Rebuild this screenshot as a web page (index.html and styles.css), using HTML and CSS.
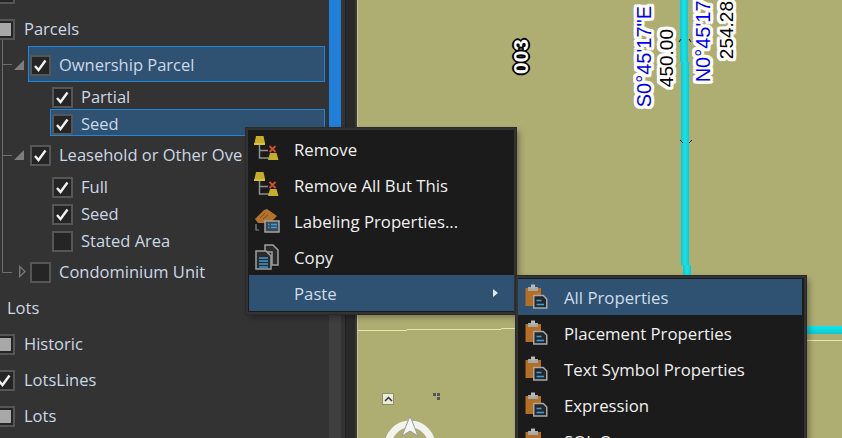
FILE: index.html
```html
<!DOCTYPE html>
<html lang="en">
<head>
<meta charset="utf-8">
<title>Labeling</title>
<link rel="stylesheet" href="styles.css">
</head>
<body>
<svg class="defs" width="0" height="0">
  <symbol id="check" viewBox="0 0 21 21"><path d="M5 11l3.5 4L15.5 5.5" fill="none" stroke="#f2f2f2" stroke-width="2.4"/></symbol>
  <symbol id="ic-remove" viewBox="0 0 26 26">
    <path d="M2 0h7.500l1.500 7H0.500z" fill="#c7ad2a"/><rect x="0" y="7" width="11" height="2" fill="#d9c23c"/>
    <path d="M5.500 9v13H15M5.500 14.500H14" fill="none" stroke="#8f8f8f" stroke-width="1.500"/>
    <path d="M15.500 10l6 6M21.500 10l-6 6" stroke="#d2502a" stroke-width="1.800"/>
    <path d="M16 17h6.500l2 7H14z" fill="#c7ad2a"/>
  </symbol>
  <symbol id="ic-label" viewBox="0 0 26 26">
    <path d="M1 11L10 2l3-1 10 7-7 7H4z" fill="#b5722a"/><path d="M6 10l5-5M9 11l5-4" stroke="#7a4a18"/>
    <path d="M2 16v6h3" fill="none" stroke="#8a8a8a" stroke-width="1.200"/>
    <rect x="11" y="13" width="14" height="11" fill="#3c4a56" stroke="#a5a5a5" stroke-width="1.500"/>
    <path d="M14 16.500h1.500M14 19.500h1.500M17 16.500h6M17 19.500h6" stroke="#3c9ad8" stroke-width="1.500"/>
  </symbol>
  <symbol id="ic-copy" viewBox="0 0 26 26">
    <path d="M11 1h8l5 5v15h-6V8h-7z" fill="#2b2b2b" stroke="#a0a0a0" stroke-width="1.500"/>
    <path d="M2 7h10l5 5v13H2z" fill="#2b2b2b" stroke="#a0a0a0" stroke-width="1.500"/>
    <path d="M5 14h9M5 17h9M5 20h9M5 23h9" stroke="#3c9ad8" stroke-width="1.600"/>
  </symbol>
  <symbol id="ic-clip" viewBox="0 0 24 26">
    <rect x="0.500" y="4" width="15.500" height="18" fill="#b46f22"/>
    <rect x="3" y="3" width="10" height="4" fill="#a8a8a8"/><rect x="6" y="0.500" width="4" height="4" fill="#b8b8b8"/>
    <path d="M8.750 11.500h9.500l3.500 3.500v9H8.750z" fill="#22272c" stroke="#a8a8a8" stroke-width="1.500"/>
    <path d="M11.500 16.500h5" stroke="#3c9ad8" stroke-width="1.600"/><path d="M11.500 20.500h7.500" stroke="#3c9ad8" stroke-width="1.600"/>
  </symbol>
</svg>

<div class="app">
  <aside class="panel">
    <svg class="tree-lines" width="30" height="290"><path d="M2.500 38V272.500H12M2.500 64.500H12M2.500 155.500H12" fill="none" stroke="#6e6e6e"/></svg>
    <div class="tree">
      <div class="row l0"><span class="cb mixed"></span></div>
      <div class="row l0"><span class="cb mixed"></span><span class="txt">Parcels</span></div>
      <div class="row l1 sel"><i class="tri open"></i><span class="cb"><svg><use href="#check"/></svg></span><span class="txt">Ownership Parcel</span></div>
      <div class="row l2 short"><span class="cb"><svg><use href="#check"/></svg></span><span class="txt">Partial</span></div>
      <div class="row l2 short sel"><span class="cb"><svg><use href="#check"/></svg></span><span class="txt">Seed</span></div>
      <div class="row l1"><i class="tri open"></i><span class="cb"><svg><use href="#check"/></svg></span><span class="txt">Leasehold or Other Ove</span></div>
      <div class="row l2 short"><span class="cb"><svg><use href="#check"/></svg></span><span class="txt">Full</span></div>
      <div class="row l2 short"><span class="cb"><svg><use href="#check"/></svg></span><span class="txt">Seed</span></div>
      <div class="row l2 short"><span class="cb"></span><span class="txt">Stated Area</span></div>
      <div class="row l1"><i class="tri closed"></i><span class="cb"></span><span class="txt">Condominium Unit</span></div>
      <div class="row head"><span class="txt">Lots</span></div>
      <div class="row l0"><span class="cb mixed"></span><span class="txt">Historic</span></div>
      <div class="row l0"><span class="cb"><svg><use href="#check"/></svg></span><span class="txt">LotsLines</span></div>
      <div class="row l0"><span class="cb mixed"></span><span class="txt">Lots</span></div>
    </div>
  </aside>
  <div class="scrollbar"><div class="thumb"></div></div>
  <div class="gutter"></div>

  <main class="map">
    <div class="pale p1"></div><div class="pale p2"></div><div class="pale p4"></div><div class="pale p3"></div>
    <div class="road r1"></div><div class="road r2"></div><div class="road r4"></div><div class="road r3"></div>
    <svg class="caret c1" width="14" height="8" viewBox="0 0 14 8"><path d="M1 6l2-3M13 6l-2-3" stroke="#111" stroke-width="1"/></svg>
    <svg class="caret c2" width="14" height="8" viewBox="0 0 14 8"><path d="M1 1l3 3M13 1l-3 3" stroke="#111" stroke-width="1"/></svg>
    <div class="lbl blue l-a">S0°45'17"E</div>
    <div class="lbl l-b">450.00</div>
    <div class="lbl blue l-c">N0°45'17"E</div>
    <div class="lbl l-d">254.28</div>
    <div class="lbl parcel">003</div>
    <button class="nav-toggle"><svg width="9" height="6" viewBox="0 0 9 6"><path d="M1 5l3.500-3.500L8 5" fill="none" stroke="#333" stroke-width="1.500"/></svg></button>
    <svg class="dots" width="8" height="8"><path d="M0 0h3v3H0zM4 0h3v3H4zM4 4h3v3H4z" fill="#555"/></svg>
    <svg class="compass" width="56" height="24" viewBox="0 0 56 24"><circle cx="27" cy="30" r="22" fill="none" stroke="#f2f2ee" stroke-width="7"/><path d="M27 0l8 20-8-5-8 5z" fill="#f6f6f2" stroke="#9a9a9a"/></svg>
  </main>

  <nav class="menu main-menu">
    <div class="item"><svg class="ico"><use href="#ic-remove"/></svg><span class="txt">Remove</span></div>
    <div class="item"><svg class="ico"><use href="#ic-remove"/></svg><span class="txt">Remove All But This</span></div>
    <div class="item"><svg class="ico"><use href="#ic-label"/></svg><span class="txt">Labeling Properties...</span></div>
    <div class="item"><svg class="ico"><use href="#ic-copy"/></svg><span class="txt">Copy</span></div>
    <div class="item active"><svg class="ico"></svg><span class="txt">Paste</span><i class="arrow"></i></div>
  </nav>
  <nav class="menu sub-menu">
    <div class="item active"><svg class="ico"><use href="#ic-clip"/></svg><span class="txt">All Properties</span></div>
    <div class="item"><svg class="ico"><use href="#ic-clip"/></svg><span class="txt">Placement Properties</span></div>
    <div class="item"><svg class="ico"><use href="#ic-clip"/></svg><span class="txt">Text Symbol Properties</span></div>
    <div class="item"><svg class="ico"><use href="#ic-clip"/></svg><span class="txt">Expression</span></div>
    <div class="item"><svg class="ico"><use href="#ic-clip"/></svg><span class="txt">SQL Query</span></div>
  </nav>
</div>
</body>
</html>
```
FILE: styles.css
```css
* { box-sizing: border-box; }
html, body { margin: 0; height: 100%; background: #333; }
.defs { position: absolute; }
.app {
  position: relative;
  display: flex;
  width: 842px;
  height: 438px;
  overflow: hidden;
  font: 16.5px/20px "Open Sans", "Noto Sans", sans-serif;
}
.txt { margin-top: 2px; }

/* Contents pane */
.panel { position: relative; width: 329px; flex: none; overflow: hidden; background: #333; color: #cbd8e6; }
.tree-lines { position: absolute; left: 0; top: 0; }
.tree { margin: -26px 4px 0 -6px; }
.row {
  position: relative;
  display: flex;
  align-items: center;
  gap: 8px;
  height: 36px;
  padding-left: 2px;
  white-space: nowrap;
}
.row.short { height: 27px; }
.l0 { padding-left: 0; gap: 9px; }
.l1 { margin-left: 34px; }
.l2 { margin-left: 56px; }
.head { padding-left: 13px; }
.sel { background: #2f5273; outline: 1px solid #1f86dc; outline-offset: -1px; }
.cb {
  display: block;
  flex: none;
  width: 21px;
  height: 21px;
  margin-top: 3px;
  background: #252525;
  border: 2px solid #565656;
  position: relative;
}
.cb svg { position: absolute; left: -2px; top: -2px; width: 21px; height: 21px; }
.cb.mixed::after { content: ""; position: absolute; left: 2px; top: 2px; width: 13px; height: 13px; background: #a8a8a8; }
.tri { position: absolute; left: -14px; top: 14px; width: 10px; height: 10px; }
.tri.open { background: #7d7d7d; clip-path: polygon(100% 0, 100% 100%, 0 100%); }
.tri.closed { left: -9px; top: 12px; width: 7px; height: 13px; background: #777; clip-path: polygon(0 0, 100% 50%, 0 100%, 0 0, 1.500px 3px, 1.500px 10px, 5px 6.500px, 1.500px 3px); }

.scrollbar { width: 16px; flex: none; background: #333; }
.thumb { width: 12px; height: 100%; background: linear-gradient(#1f7fd9 0 314px, #3f3f3f 314px); }
.gutter { width: 12px; flex: none; background: #292929; border-left: 1px solid #1f1f1f; border-right: 2px solid #3a3a3a; }

/* Map */
.map { position: relative; flex: 1; background: #aead72; border-left: 1px solid #c8c78a; }
.pale { position: absolute; height: 1px; background: #e6e6a8; }
.p1 { left: 0; top: 330px; width: 49px; }
.p2 { left: 49px; top: 329px; width: 94px; }
.p4 { left: 143px; top: 328px; width: 15px; }
.p3 { left: 448px; top: 340px; width: 37px; }
.road { position: absolute; background: linear-gradient(90deg, #14c4cc, #10e8ec 50%, #14c4cc); }
.r1 { left: 322px; top: 0; width: 8px; height: 62px; }
.r2 { left: 323px; top: 62px; width: 8px; height: 203px; }
.r4 { left: 325px; top: 265px; width: 8px; height: 30px; }
.r3 { left: 448px; top: 326px; width: 37px; height: 8px; background: linear-gradient(#10e8ec, #14c4cc); }
.caret { position: absolute; }
.c1 { left: 320px; top: 36px; }
.c2 { left: 321px; top: 139px; }
.lbl {
  position: absolute;
  writing-mode: vertical-rl;
  transform: rotate(180deg);
  font: 19px/20px "Liberation Sans", Arial, sans-serif;
  color: #000;
  white-space: nowrap;
  text-shadow: 2px 0 #fff, -2px 0 #fff, 0 2px #fff, 0 -2px #fff, 2px 2px #fff, -2px -2px #fff, 2px -2px #fff, -2px 2px #fff, 3px 0 #fff, -3px 0 #fff, 0 3px #fff, 0 -3px #fff, 3px 2px #fff, -3px -2px #fff, 3px -2px #fff, -3px 2px #fff, 2px 3px #fff, -2px 3px #fff, 2px -3px #fff, -2px -3px #fff;
}
.blue { color: #0000f0; font-size: 20px; }
.l-a { left: 276px; bottom: 331px; }
.l-b { left: 299px; bottom: 351px; }
.l-c { left: 335px; bottom: 356px; }
.l-d { left: 359px; bottom: 379px; }
.parcel {
  left: 153px;
  top: 39px;
  font-weight: 700;
  font-size: 21px;
  color: #fff;
  text-shadow: 1px 0 #000, -1px 0 #000, 0 1px #000, 0 -1px #000, 2px 0 #000, -2px 0 #000, 0 2px #000, 0 -2px #000, 1px 1px #000, -1px -1px #000, 1px -1px #000, -1px 1px #000;
}
.nav-toggle {
  position: absolute;
  left: 24px;
  top: 393px;
  width: 12px;
  height: 12px;
  padding: 0;
  display: flex;
  align-items: center;
  justify-content: center;
  background: #e9e9dc;
  border: 1px solid #8f8e62;
}
.dots { position: absolute; left: 75px; top: 393px; }
.compass { position: absolute; left: 25px; top: 416px; }

/* Context menus */
.menu {
  position: absolute;
  background: #1b1b1b;
  border: 2px solid #333;
  outline: 1px solid #2a2a2a;
  box-shadow: 3px 3px 6px rgba(0, 0, 0, .35);
  color: #f0f0f0;
  font-size: 16.75px;
}
.main-menu { left: 246px; top: 128px; width: 270px; height: 186px; padding-top: 1px; padding-left: 1px; }
.sub-menu { left: 516px; top: 276px; width: 290px; height: 170px; padding: 1px 2px 0 0; }
.item { position: relative; display: flex; align-items: center; height: 36px; }
.main-menu .item { padding-left: 5px; gap: 14px; }
.sub-menu .item { padding-left: 7px; gap: 14px; }
.ico { flex: none; width: 26px; height: 26px; }
.sub-menu .ico { width: 24px; margin-right: 1px; }
.active { background: #2f5273; color: #cfdcea; }
.arrow { position: absolute; right: 16px; top: 14px; width: 0; height: 0; border: 4px solid transparent; border-left: 5px solid #e6e6e6; border-right: 0; }
```
